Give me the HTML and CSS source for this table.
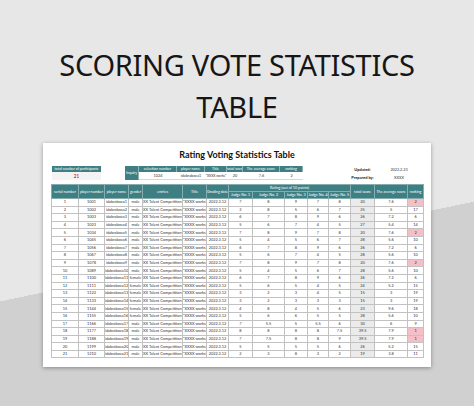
FILE: index.html
```html
<!DOCTYPE html>
<html>
<head>
<meta charset="utf-8">
<link rel="stylesheet" href="styles.css">
</head>
<body>
<div class="page">
  <h1 class="headline">SCORING VOTE STATISTICS<br>TABLE</h1>
  <div class="sheet">
    <div class="sheet-title">Rating Voting Statistics Table</div>
    <div class="info">
      <div class="part">
        <div class="th">total number of participants</div>
        <div class="red">21</div>
      </div>
      <div class="inq">
        <div class="inq-label th">Inquiry</div>
        <div class="th">selection number</div>
        <div class="th">player name</div>
        <div class="th">Title</div>
        <div class="th">total score</div>
        <div class="th">The average score</div>
        <div class="th">ranking</div>
        <div class="iv">1024</div>
        <div class="iv">idabraboca1</div>
        <div class="iv small">"XXXX works"</div>
        <div class="iv">20</div>
        <div class="iv">7.6</div>
        <div class="iv">2</div>
      </div>
      <div class="meta">
        <div class="ml">Updated:</div><div class="mv">2022.2.23</div>
        <div class="ml">Prepared by:</div><div class="mv">XXXX</div>
      </div>
    </div>
    <table class="grid">
      <colgroup>
        <col class="c27"><col class="c26"><col class="c24"><col class="c14"><col class="c40"><col class="c24"><col class="c22"><col class="c24"><col class="c32"><col class="c23"><col class="c21"><col class="c22"><col class="c24"><col class="c33"><col class="c16">
      </colgroup>
      <thead>
        <tr>
          <th rowspan="2">serial number</th>
          <th rowspan="2">player number</th>
          <th rowspan="2">player name</th>
          <th rowspan="2">gender</th>
          <th rowspan="2">entries</th>
          <th rowspan="2">Title</th>
          <th rowspan="2">Grading date</th>
          <th colspan="5">Rating (out of 10 points)</th>
          <th rowspan="2">total score</th>
          <th rowspan="2">The average score</th>
          <th rowspan="2">ranking</th>
        </tr>
        <tr>
          <th>Judge No. 1</th><th>Judge No. 2</th><th>Judge No. 3</th><th>Judge No. 4</th><th>Judge No. 5</th>
        </tr>
      </thead>
      <tbody>
        <tr><td>1</td><td>1001</td><td>idabraboca1</td><td>male</td><td class="l">XX Talent Competition</td><td>"XXXX works"</td><td>2022.3.12</td><td>7</td><td>8</td><td>9</td><td>7</td><td>8</td><td class="tot">20</td><td>7.6</td><td class="hot">2</td></tr>
        <tr><td>2</td><td>1002</td><td>idabraboca2</td><td>male</td><td class="l">XX Talent Competition</td><td>"XXXX works"</td><td>2022.3.12</td><td>3</td><td>8</td><td>5</td><td>6</td><td>7</td><td class="tot">25</td><td>5</td><td>17</td></tr>
        <tr><td>3</td><td>1003</td><td>idabraboca3</td><td>male</td><td class="l">XX Talent Competition</td><td>"XXXX works"</td><td>2022.3.12</td><td>6</td><td>7</td><td>8</td><td>9</td><td>6</td><td class="tot">26</td><td>7.2</td><td>6</td></tr>
        <tr><td>4</td><td>1023</td><td>idabraboca4</td><td>male</td><td class="l">XX Talent Competition</td><td>"XXXX works"</td><td>2022.3.12</td><td>5</td><td>6</td><td>7</td><td>4</td><td>5</td><td class="tot">27</td><td>5.4</td><td>14</td></tr>
        <tr><td>5</td><td>1034</td><td>idabraboca5</td><td>male</td><td class="l">XX Talent Competition</td><td>"XXXX works"</td><td>2022.3.12</td><td>7</td><td>8</td><td>9</td><td>7</td><td>8</td><td class="tot">20</td><td>7.6</td><td class="hot">2</td></tr>
        <tr><td>6</td><td>1045</td><td>idabraboca6</td><td>male</td><td class="l">XX Talent Competition</td><td>"XXXX works"</td><td>2022.3.12</td><td>5</td><td>4</td><td>5</td><td>6</td><td>7</td><td class="tot">28</td><td>5.6</td><td>10</td></tr>
        <tr><td>7</td><td>1056</td><td>idabraboca7</td><td>male</td><td class="l">XX Talent Competition</td><td>"XXXX works"</td><td>2022.3.12</td><td>6</td><td>7</td><td>8</td><td>9</td><td>6</td><td class="tot">26</td><td>7.2</td><td>6</td></tr>
        <tr><td>8</td><td>1067</td><td>idabraboca8</td><td>male</td><td class="l">XX Talent Competition</td><td>"XXXX works"</td><td>2022.3.12</td><td>5</td><td>6</td><td>7</td><td>4</td><td>5</td><td class="tot">28</td><td>5.6</td><td>10</td></tr>
        <tr><td>9</td><td>1078</td><td>idabraboca9</td><td>male</td><td class="l">XX Talent Competition</td><td>"XXXX works"</td><td>2022.3.12</td><td>7</td><td>8</td><td>9</td><td>7</td><td>8</td><td class="tot">20</td><td>7.6</td><td class="hot">2</td></tr>
        <tr><td>10</td><td>1089</td><td>idabraboca10</td><td>male</td><td class="l">XX Talent Competition</td><td>"XXXX works"</td><td>2022.3.12</td><td>5</td><td>4</td><td>5</td><td>6</td><td>7</td><td class="tot">28</td><td>5.6</td><td>10</td></tr>
        <tr><td>11</td><td>1100</td><td>idabraboca11</td><td>female</td><td class="l">XX Talent Competition</td><td>"XXXX works"</td><td>2022.3.12</td><td>6</td><td>7</td><td>8</td><td>9</td><td>6</td><td class="tot">26</td><td>7.2</td><td>6</td></tr>
        <tr><td>12</td><td>1111</td><td>idabraboca12</td><td>female</td><td class="l">XX Talent Competition</td><td>"XXXX works"</td><td>2022.3.12</td><td>5</td><td>6</td><td>5</td><td>4</td><td>5</td><td class="tot">24</td><td>5.2</td><td>15</td></tr>
        <tr><td>13</td><td>1122</td><td>idabraboca13</td><td>female</td><td class="l">XX Talent Competition</td><td>"XXXX works"</td><td>2022.3.12</td><td>3</td><td>2</td><td>3</td><td>4</td><td>5</td><td class="tot">15</td><td>3</td><td>19</td></tr>
        <tr><td>14</td><td>1133</td><td>idabraboca14</td><td>female</td><td class="l">XX Talent Competition</td><td>"XXXX works"</td><td>2022.3.12</td><td>3</td><td>2</td><td>3</td><td>3</td><td>3</td><td class="tot">15</td><td>3</td><td>19</td></tr>
        <tr><td>15</td><td>1144</td><td>idabraboca15</td><td>female</td><td class="l">XX Talent Competition</td><td>"XXXX works"</td><td>2022.3.12</td><td>4</td><td>8</td><td>4</td><td>5</td><td>6</td><td class="tot">23</td><td>9.6</td><td>18</td></tr>
        <tr><td>16</td><td>1155</td><td>idabraboca16</td><td>female</td><td class="l">XX Talent Competition</td><td>"XXXX works"</td><td>2022.3.12</td><td>5</td><td>6</td><td>6</td><td>5</td><td>5</td><td class="tot">28</td><td>5.6</td><td>10</td></tr>
        <tr><td>17</td><td>1166</td><td>idabraboca17</td><td>male</td><td class="l">XX Talent Competition</td><td>"XXXX works"</td><td>2022.3.12</td><td>7</td><td>5.5</td><td>5</td><td>5.5</td><td>6</td><td class="tot">30</td><td>6</td><td>9</td></tr>
        <tr><td>18</td><td>1177</td><td>idabraboca18</td><td>male</td><td class="l">XX Talent Competition</td><td>"XXXX works"</td><td>2022.3.12</td><td>8</td><td>8</td><td>8</td><td>8</td><td>7.5</td><td class="tot">39.5</td><td>7.9</td><td class="hot">1</td></tr>
        <tr><td>19</td><td>1188</td><td>idabraboca19</td><td>male</td><td class="l">XX Talent Competition</td><td>"XXXX works"</td><td>2022.3.12</td><td>7</td><td>7.5</td><td>8</td><td>8</td><td>9</td><td class="tot">39.5</td><td>7.9</td><td class="hot">1</td></tr>
        <tr><td>20</td><td>1199</td><td>idabraboca20</td><td>male</td><td class="l">XX Talent Competition</td><td>"XXXX works"</td><td>2022.3.12</td><td>5</td><td>5</td><td>5</td><td>5</td><td>6</td><td class="tot">26</td><td>5.2</td><td>15</td></tr>
        <tr><td>21</td><td>1210</td><td>idabraboca21</td><td>male</td><td class="l">XX Talent Competition</td><td>"XXXX works"</td><td>2022.3.12</td><td>2</td><td>3</td><td>8</td><td>3</td><td>2</td><td class="tot">19</td><td>3.8</td><td>11</td></tr>
      </tbody>
    </table>
  </div>
</div>
</body>
</html>
```

FILE: styles.css
```css
html, body {
  margin: 0;
  padding: 0;
}

.page {
  width: 474px;
  height: 406px;
  overflow: hidden;
  display: flow-root;
  background: linear-gradient(168.1deg, #e7e7e7 295px, #d0d0d0 295px);
}

.headline {
  margin: 44px 0 0;
  font: 400 29px/42px "Noto Sans", sans-serif;
  letter-spacing: -0.3px;
  text-align: center;
  color: #161616;
}

.sheet {
  margin: 15px 0 0 43px;
  width: 388px;
  height: 224px;
  box-sizing: border-box;
  padding: 7px 8px 0;
  background: #fff;
  box-shadow: 0 1px 4px rgba(0, 0, 0, 0.35);
  font-family: Lato, "Noto Sans", sans-serif;
}

.sheet-title {
  font: 700 9px/10px Lato, sans-serif;
  text-align: center;
  color: #111;
}

.info {
  display: flex;
  margin-top: 6px;
  height: 14px;
}

.th {
  background: #3e7f84;
  color: #fff;
  font-size: 3.6px;
  line-height: 6px;
  text-align: center;
  white-space: nowrap;
  overflow: hidden;
  border-right: 0.5px solid #8cb3b6;
  box-sizing: border-box;
}

.part {
  margin-left: 1px;
  width: 52px;
  display: grid;
  grid-template-rows: 6px 8px;
}

.part .th {
  border-right: 0;
}

.red {
  color: #c0392b;
  font-size: 4.6px;
  font-weight: 700;
  line-height: 8px;
  text-align: center;
  background: #f3f3f3;
}

.inq {
  margin-left: 24px;
  display: grid;
  grid-template-columns: 14px 38px 28px 22px 16px 37px 23px;
  grid-template-rows: 6px 8px;
}

.inq-label {
  grid-row: span 2;
  display: flex;
  align-items: center;
  justify-content: center;
}

.iv {
  font-size: 3.8px;
  line-height: 8px;
  text-align: center;
  white-space: nowrap;
  overflow: hidden;
  color: #333;
  border-bottom: 0.5px solid #d6d6d6;
  box-sizing: border-box;
}

.iv.small {
  font-size: 3.3px;
}

.meta {
  margin-left: 47px;
  display: grid;
  grid-template-columns: 25px 48px;
  grid-auto-rows: 8px;
}

.ml {
  font-size: 4px;
  font-weight: 700;
  line-height: 8px;
  text-align: center;
  white-space: nowrap;
  color: #222;
}

.mv {
  font-size: 3.8px;
  line-height: 8px;
  text-align: center;
  color: #333;
}

.grid {
  margin-top: 4px;
  width: 372px;
  table-layout: fixed;
  border-collapse: collapse;
  border: 1px solid #5a5a5a;
}

.c27 { width: 27px; }
.c26 { width: 26px; }
.c24 { width: 24px; }
.c14 { width: 14px; }
.c40 { width: 40px; }
.c22 { width: 22px; }
.c32 { width: 32px; }
.c23 { width: 23px; }
.c21 { width: 21px; }
.c33 { width: 33px; }
.c16 { width: 16px; }

.grid thead tr {
  height: 7px;
}

.grid tbody tr {
  height: 7.6px;
}

.grid th {
  padding: 0;
  box-sizing: border-box;
  background: #3e7f84;
  color: #fff;
  font-weight: 400;
  font-size: 3.7px;
  line-height: 4px;
  white-space: nowrap;
  overflow: hidden;
  text-align: center;
  border: 0.5px solid #86aeb1;
}

.grid td {
  padding: 0;
  box-sizing: border-box;
  font-size: 3.9px;
  line-height: 4px;
  color: #333;
  white-space: nowrap;
  overflow: hidden;
  text-align: center;
  border: 0.5px solid #c2c2c2;
}

.grid td.l {
  text-align: left;
}

.grid td.tot {
  background: #ebebeb;
}

.grid td.hot {
  background: #f5bfc7;
}
```
